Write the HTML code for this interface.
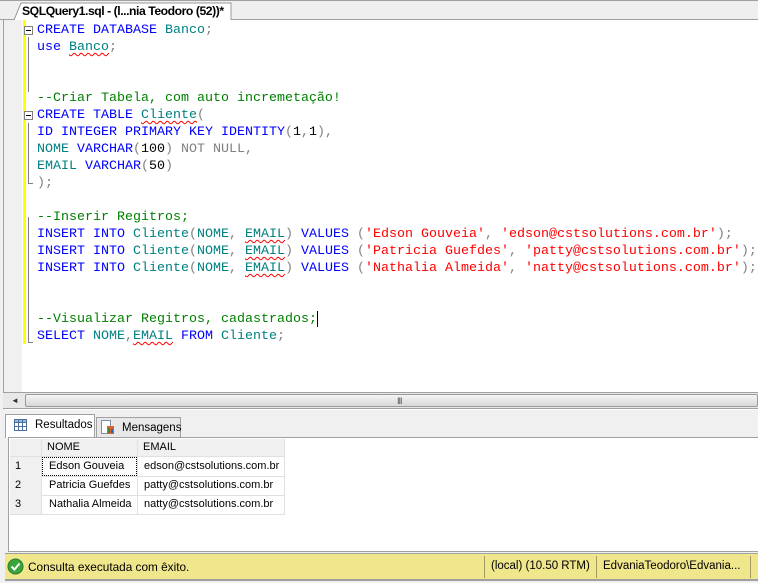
<!DOCTYPE html>
<html><head><meta charset="utf-8"><style>
*{margin:0;padding:0;box-sizing:border-box}
body{width:758px;height:583px;overflow:hidden;background:#f0f0f0;font-family:"Liberation Sans",sans-serif;position:relative}
.abs{position:absolute}
.code{position:absolute;left:37px;font-family:"Liberation Mono",monospace;font-size:13.33px;line-height:17px;white-space:pre;color:#000}
.k{color:#0000ff}.i{color:#008080}.c{color:#008000}.s{color:#ff0000}.g{color:#808080}
.u{text-decoration:underline wavy #ff0000;text-decoration-thickness:1px;text-underline-offset:2px}
.cell{position:absolute;font-size:11px;line-height:19px;color:#000;white-space:nowrap}
</style></head><body>
<div class="abs" style="left:0;top:0;width:758px;height:20px;background:#efefef;border-top:1px solid #a0a0a0;border-bottom:1px solid #a0a0a0"></div>
<svg class="abs" style="left:0;top:0" width="240" height="21"><path d="M14 20 L21 3 L231 3 L231 20" fill="#fff" stroke="#9a9a9a"/></svg>
<div class="abs" style="left:22px;top:3px;font-size:12.2px;font-weight:bold;letter-spacing:-0.45px;line-height:17px;color:#000">SQLQuery1.sql - (l...nia Teodoro (52))*</div>
<div class="abs" style="left:3px;top:20px;width:755px;height:372px;background:#fff;border-left:1px solid #a0a0a0"></div>
<div class="abs" style="left:4px;top:20px;width:18px;height:372px;background:#f0f0f0"></div>
<div class="abs" style="left:23px;top:20px;width:3px;height:324px;background:#ffff00"></div>
<div class="abs" style="left:28px;top:37px;width:1px;height:55px;background:#808080"></div>
<div class="abs" style="left:28px;top:123px;width:1px;height:60px;background:#808080"></div>
<div class="abs" style="left:28px;top:183px;width:5px;height:1px;background:#808080"></div>
<div class="abs" style="left:28px;top:217px;width:1px;height:126px;background:#808080"></div>
<div class="abs" style="left:28px;top:342px;width:5px;height:1px;background:#808080"></div>
<div class="abs" style="left:24px;top:26px;width:9px;height:9px;border:1px solid #808080;background:#fff"></div>
<div class="abs" style="left:26px;top:30px;width:5px;height:1px;background:#000"></div>
<div class="abs" style="left:24px;top:111px;width:9px;height:9px;border:1px solid #808080;background:#fff"></div>
<div class="abs" style="left:26px;top:115px;width:5px;height:1px;background:#000"></div>
<div class="code" style="top:22px"><span class="k">CREATE DATABASE</span> <span class="i">Banco</span><span class="g">;</span>
<span class="k">use</span> <span class="i u">Banco</span><span class="g">;</span>


<span class="c">--Criar Tabela, com auto incremetação!</span>
<span class="k">CREATE TABLE</span> <span class="i u">Cliente</span><span class="g">(</span>
<span class="k">ID INTEGER PRIMARY KEY IDENTITY</span><span class="g">(</span>1<span class="g">,</span>1<span class="g">),</span>
<span class="i">NOME</span> <span class="k">VARCHAR</span><span class="g">(</span>100<span class="g">) NOT NULL,</span>
<span class="i">EMAIL</span> <span class="k">VARCHAR</span><span class="g">(</span>50<span class="g">)</span>
<span class="g">);</span>

<span class="c">--Inserir Regitros;</span>
<span class="k">INSERT INTO</span> <span class="i">Cliente</span><span class="g">(</span><span class="i">NOME</span><span class="g">,</span> <span class="i u">EMAIL</span><span class="g">)</span> <span class="k">VALUES</span> <span class="g">(</span><span class="s">'Edson Gouveia'</span><span class="g">,</span> <span class="s">'edson@cstsolutions.com.br'</span><span class="g">);</span>
<span class="k">INSERT INTO</span> <span class="i">Cliente</span><span class="g">(</span><span class="i">NOME</span><span class="g">,</span> <span class="i u">EMAIL</span><span class="g">)</span> <span class="k">VALUES</span> <span class="g">(</span><span class="s">'Patricia Guefdes'</span><span class="g">,</span> <span class="s">'patty@cstsolutions.com.br'</span><span class="g">);</span>
<span class="k">INSERT INTO</span> <span class="i">Cliente</span><span class="g">(</span><span class="i">NOME</span><span class="g">,</span> <span class="i u">EMAIL</span><span class="g">)</span> <span class="k">VALUES</span> <span class="g">(</span><span class="s">'Nathalia Almeida'</span><span class="g">,</span> <span class="s">'natty@cstsolutions.com.br'</span><span class="g">);</span>


<span class="c">--Visualizar Regitros, cadastrados;</span>
<span class="k">SELECT</span> <span class="i">NOME</span><span class="g">,</span><span class="i u">EMAIL</span> <span class="k">FROM</span> <span class="i">Cliente</span><span class="g">;</span></div>
<div class="abs" style="left:317px;top:311px;width:1px;height:16px;background:#000"></div>
<div class="abs" style="left:3px;top:392px;width:755px;height:17px;background:#e8e8e8;border-top:1px solid #a0a0a0;border-bottom:1px solid #a0a0a0"></div>
<div class="abs" style="left:11px;top:396px;font-size:8px;color:#333">◄</div>
<div class="abs" style="left:25px;top:394px;width:733px;height:13px;background:linear-gradient(#f4f4f4,#d8d8d8);border:1px solid #9a9a9a;border-radius:2px"></div>
<div class="abs" style="left:397px;top:396px;font-size:9px;color:#555;letter-spacing:-1px">III</div>
<div class="abs" style="left:5px;top:409px;width:753px;height:1px;background:#fff"></div>
<div class="abs" style="left:5px;top:414px;width:90px;height:24px;background:#fff;border:1px solid #a0a0a0;border-bottom:none"></div>
<svg class="abs" style="left:14px;top:419px" width="13" height="12"><rect x="0.5" y="0.5" width="12" height="11" fill="#fff" stroke="#4a6f9c"/><rect x="0.5" y="0.5" width="12" height="3" fill="#9ab8de" stroke="#4a6f9c"/><path d="M4.5 0v12M8.5 0v12M0 7.5h13" stroke="#4a6f9c"/></svg>
<div class="abs" style="left:35px;top:419px;font-size:11.5px">Resultados</div>
<div class="abs" style="left:96px;top:417px;width:85px;height:20px;background:#e8e8e8;border:1px solid #a0a0a0;border-bottom:none"></div>
<svg class="abs" style="left:101px;top:420px" width="14" height="15"><rect x="0.5" y="0.5" width="9" height="13" fill="#fff" stroke="#7a8fa8"/><rect x="6" y="6" width="7" height="8" fill="#e06030"/><rect x="7" y="8" width="2" height="5" fill="#3a8a3a"/><rect x="10" y="9" width="2" height="4" fill="#3060c0"/></svg>
<div class="abs" style="left:122px;top:422px;font-size:11.5px">Mensagens</div>
<div class="abs" style="left:8px;top:437px;width:750px;height:115px;background:#fff;border:1px solid #a0a0a0;border-right:none"></div>
<div class="abs" style="left:10px;top:439px;width:274px;height:17px;background:#f0f0f0"></div>
<div class="abs" style="left:41px;top:439px;width:1px;height:75px;background:#e0e0e0"></div>
<div class="abs" style="left:137px;top:439px;width:1px;height:75px;background:#e0e0e0"></div>
<div class="abs" style="left:284px;top:439px;width:1px;height:75px;background:#e0e0e0"></div>
<div class="abs" style="left:10px;top:456px;width:275px;height:1px;background:#e0e0e0"></div>
<div class="abs" style="left:10px;top:476px;width:275px;height:1px;background:#e0e0e0"></div>
<div class="abs" style="left:10px;top:495px;width:275px;height:1px;background:#e0e0e0"></div>
<div class="abs" style="left:10px;top:514px;width:275px;height:1px;background:#e0e0e0"></div>
<div class="abs" style="left:10px;top:457px;width:31px;height:57px;background:#f0f0f0"></div>
<div class="abs" style="left:42px;top:457px;width:95px;height:19px;border:1px dotted #000;background:#fafafa"></div>
<div class="cell" style="left:47px;top:438px">NOME</div>
<div class="cell" style="left:143px;top:438px">EMAIL</div>
<div class="cell" style="left:15px;top:457px">1</div>
<div class="cell" style="left:49px;top:457px">Edson Gouveia</div>
<div class="cell" style="left:144px;top:457px">edson@cstsolutions.com.br</div>
<div class="cell" style="left:15px;top:476px">2</div>
<div class="cell" style="left:49px;top:476px">Patricia Guefdes</div>
<div class="cell" style="left:144px;top:476px">patty@cstsolutions.com.br</div>
<div class="cell" style="left:15px;top:495px">3</div>
<div class="cell" style="left:49px;top:495px">Nathalia Almeida</div>
<div class="cell" style="left:144px;top:495px">natty@cstsolutions.com.br</div>
<div class="abs" style="left:5px;top:553px;width:753px;height:28px;background:#f0e68c;border-top:1px solid #a0a0a0;border-bottom:2px solid #a0a0a0"></div>
<svg class="abs" style="left:7px;top:558px" width="17" height="17"><circle cx="8.5" cy="8.5" r="7.5" fill="#3aa53a" stroke="#2a7a2a"/><path d="M4.5 8.5 L7.5 11.5 L12.5 5.5" stroke="#fff" stroke-width="2" fill="none"/></svg>
<div class="abs" style="left:28px;top:560px;font-size:11.8px;color:#000">Consulta executada com êxito.</div>
<div class="abs" style="left:484px;top:556px;width:1px;height:22px;background:#a09a60"></div>
<div class="abs" style="left:491px;top:560px;font-size:11.5px">(local) (10.50 RTM)</div>
<div class="abs" style="left:596px;top:556px;width:1px;height:22px;background:#a09a60"></div>
<div class="abs" style="left:603px;top:560px;font-size:11.5px">EdvaniaTeodoro\Edvania...</div>
<div class="abs" style="left:750px;top:556px;width:1px;height:22px;background:#a09a60"></div>
</body></html>
